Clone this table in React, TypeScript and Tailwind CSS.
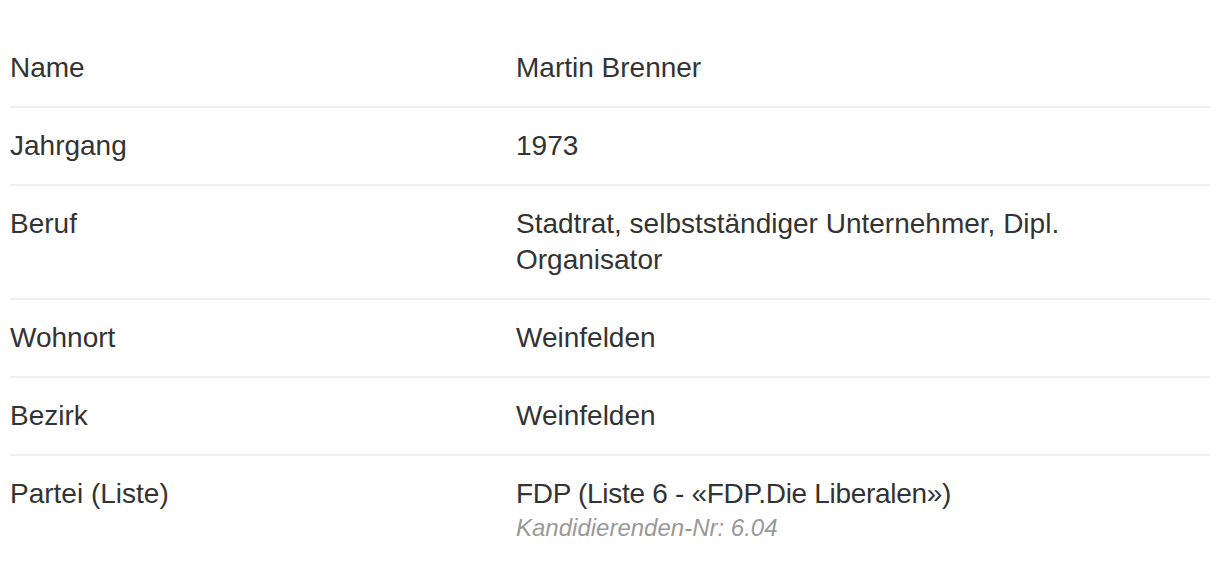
import React from "react";

const rows: { label: string; value: React.ReactNode }[] = [
  { label: "Name", value: "Martin Brenner" },
  { label: "Jahrgang", value: "1973" },
  { label: "Beruf", value: "Stadtrat, selbstständiger Unternehmer, Dipl. Organisator" },
  { label: "Wohnort", value: "Weinfelden" },
  { label: "Bezirk", value: "Weinfelden" },
  {
    label: "Partei (Liste)",
    value: (
      <>
        <div className="tracking-[-0.3px]">FDP (Liste 6 - «FDP.Die Liberalen»)</div>
        <div className="text-[24px] leading-[32px] italic text-[#999999]">Kandidierenden-Nr: 6.04</div>
      </>
    ),
  },
];

export default function App() {
  return (
    <div className="min-h-[572px] bg-white px-[10px] pt-[30px] text-[#333333] text-[28px] leading-[36px] [font-family:'Liberation_Sans',Arial,sans-serif]">
      {rows.map((r, i) => (
        <div
          key={r.label}
          className={`grid grid-cols-[506px_1fr] py-[20px] ${i < rows.length - 1 ? "border-b-2 border-[#eeeeee]" : ""}`}
        >
          <div>{r.label}</div>
          <div className="pr-[140px]">{r.value}</div>
        </div>
      ))}
    </div>
  );
}
